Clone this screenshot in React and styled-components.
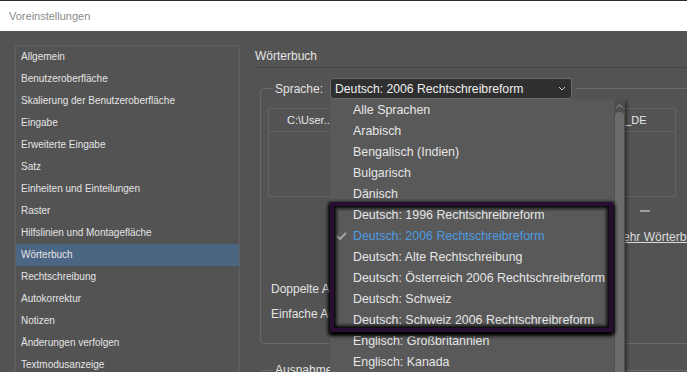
import React from 'react';
import styled, { createGlobalStyle } from 'styled-components';

const GlobalStyle = createGlobalStyle`
    html, body {
        margin: 0;
        padding: 0;
        overflow: hidden;
        background: #535353;
    }
`;

const Window = styled.div`
    width: 687px;
    height: 372px;
    overflow: hidden;
    box-sizing: border-box;
    border-top: 1px solid #2b2b2b;
    display: flex;
    flex-direction: column;
    background: #535353;
    font-family: 'Liberation Sans', Arial, sans-serif;
`;

const TitleBar = styled.div`
    height: 30px;
    flex-shrink: 0;
    background: #fff;
    padding-left: 9px;
    line-height: 30px;
    font-size: 11px;
    color: #8a8a8a;
`;

const Body = styled.div`
    flex: 1;
    min-height: 0;
    display: flex;
    padding: 14px 0 0 15px;
`;

const Sidebar = styled.div`
    width: 225px;
    flex-shrink: 0;
    box-sizing: border-box;
    border: 1px solid #5f5f5f;
    border-bottom: none;
`;

const SideItem = styled.div`
    height: 22px;
    line-height: 22px;
    padding-left: 5px;
    font-size: 10px;
    color: #e4e4e4;
    white-space: nowrap;
    background: ${(p) => (p.$active ? '#4b6683' : 'transparent')};
`;

const Content = styled.div`
    flex: 1;
    min-width: 0;
    margin-left: 14px;
    display: flex;
    flex-direction: column;
`;

const Heading = styled.div`
    height: 22px;
    line-height: 22px;
    padding-left: 1px;
    font-size: 12px;
    color: #e6e6e6;
    border-bottom: 1px solid #474747;
    flex-shrink: 0;
`;

const Group = styled.fieldset`
    margin: ${(p) => p.$top}px 0 0 6px;
    padding: 9px 0 0 7px;
    border: 1px solid #696969;
    border-radius: 4px;
    box-sizing: border-box;
    width: 460px;
    min-width: 0;
    flex-shrink: 0;
    height: ${(p) => (p.$height ? `${p.$height}px` : 'auto')};
`;

const Legend = styled.legend`
    padding: 0 3px 0 2px;
    margin-left: 5px;
`;

const LegendRow = styled.div`
    display: flex;
    align-items: center;
    gap: 7px;
    font-size: 12px;
    line-height: 16px;
    color: #e2e2e2;
`;

const SelectWrap = styled.div`
    position: relative;
`;

const SelectBox = styled.div`
    width: 242px;
    height: 21px;
    box-sizing: border-box;
    background: #2f2f2f;
    border: 1px solid #6b6b6b;
    border-radius: 3px;
    display: flex;
    align-items: center;
    justify-content: space-between;
    padding: 0 5px 0 4px;
    font-size: 12.2px;
    color: #f0f0f0;
`;

const Dropdown = styled.div`
    position: absolute;
    top: 100%;
    left: 0;
    width: 295px;
    height: 290px;
    z-index: 10;
    display: flex;
    background: #595959;
    box-shadow: 2px 2px 3px rgba(0, 0, 0, 0.45);
`;

const Options = styled.div`
    flex: 1;
    display: flex;
    flex-direction: column;
`;

const Option = styled.div`
    height: 21px;
    flex-shrink: 0;
    display: flex;
    align-items: center;
    font-size: 12.4px;
    white-space: nowrap;
    color: ${(p) => (p.$selected ? '#4c9be2' : '#e6e6e6')};
`;

const CheckSlot = styled.span`
    width: 23px;
    display: flex;
    justify-content: center;
`;

const Highlight = styled.div`
    position: relative;
    display: flex;
    flex-direction: column;

    ::after {
        content: '';
        position: absolute;
        top: -2px;
        bottom: -2px;
        left: 0;
        right: 1px;
        border: 4px solid #2a0d33;
        box-shadow: 0 2px 4px rgba(0, 0, 0, 0.3), inset 0 0 4px rgba(0, 0, 0, 0.3);
        pointer-events: none;
    }
`;

const Scrollbar = styled.div`
    width: 11px;
    display: flex;
    flex-direction: column;
    background: #4f4f4f;
`;

const ScrollUp = styled.div`
    height: 13px;
    display: flex;
    align-items: center;
    justify-content: center;
`;

const ScrollThumb = styled.div`
    flex: 1;
    margin: 0 1px;
    background: #6b6b6b;
    border-radius: 4px 4px 0 0;
`;

const DictArea = styled.div`
    width: 408px;
    display: flex;
    flex-direction: column;
`;

const Table = styled.div`
    height: 89px;
    box-sizing: border-box;
    border: 1px solid #626262;
`;

const TableHead = styled.div`
    display: grid;
    grid-template-columns: 344px 1fr;
    align-items: center;
    height: 22px;
    border-bottom: 1px solid #626262;
    font-size: 11px;
    color: #e8e8e8;
    white-space: nowrap;

    span:first-child {
        padding-left: 18px;
    }
`;

const MinusRow = styled.div`
    height: 22px;
    margin-top: 3px;
    display: flex;
    align-items: center;
    justify-content: flex-end;
    padding-right: 26px;
`;

const Minus = styled.div`
    width: 10px;
    height: 2px;
    background: #9d9d9d;
`;

const LinkRow = styled.div`
    height: 20px;
    margin-top: 5px;
    line-height: 20px;
    padding-left: 345px;
    white-space: nowrap;
    font-size: 12px;
    color: #dcdcdc;
    text-decoration: underline;
`;

const QuoteRow = styled.div`
    height: 25px;
    line-height: 25px;
    padding-left: 3px;
    font-size: 12px;
    color: #e2e2e2;
    white-space: nowrap;
    margin-top: ${(p) => p.$gap || 0}px;
`;

const sections = [
    'Allgemein',
    'Benutzeroberfläche',
    'Skalierung der Benutzeroberfläche',
    'Eingabe',
    'Erweiterte Eingabe',
    'Satz',
    'Einheiten und Einteilungen',
    'Raster',
    'Hilfslinien und Montagefläche',
    'Wörterbuch',
    'Rechtschreibung',
    'Autokorrektur',
    'Notizen',
    'Änderungen verfolgen',
    'Textmodusanzeige',
];

const before = ['Alle Sprachen', 'Arabisch', 'Bengalisch (Indien)', 'Bulgarisch', 'Dänisch'];
const german = [
    'Deutsch: 1996 Rechtschreibreform',
    'Deutsch: 2006 Rechtschreibreform',
    'Deutsch: Alte Rechtschreibung',
    'Deutsch: Österreich 2006 Rechtschreibreform',
    'Deutsch: Schweiz',
    'Deutsch: Schweiz 2006 Rechtschreibreform',
];
const after = ['Englisch: Großbritannien', 'Englisch: Kanada', 'Englisch: USA'];

const selected = 'Deutsch: 2006 Rechtschreibreform';

const Check = () => (
    <svg width="11" height="8" viewBox="0 0 11 8">
        <path d="M1 4.2 L4 7 L10 1" fill="none" stroke="#a8a8a8" strokeWidth="1.8" />
    </svg>
);

const LangOption = ({ name }) => (
    <Option $selected={name === selected}>
        <CheckSlot>{name === selected && <Check />}</CheckSlot>
        {name}
    </Option>
);

const App = () => {
    return (
        <>
            <GlobalStyle />
            <Window>
                <TitleBar>Voreinstellungen</TitleBar>
                <Body>
                    <Sidebar>
                        {sections.map((s) => (
                            <SideItem key={s} $active={s === 'Wörterbuch'}>
                                {s}
                            </SideItem>
                        ))}
                    </Sidebar>
                    <Content>
                        <Heading>Wörterbuch</Heading>
                        <Group $top={10} $height={266}>
                            <Legend>
                                <LegendRow>
                                    <span>Sprache:</span>
                                    <SelectWrap>
                                        <SelectBox>
                                            <span>{selected}</span>
                                            <svg width="8" height="5" viewBox="0 0 8 5">
                                                <path d="M1 1 L4 4 L7 1" fill="none" stroke="#c8c8c8" strokeWidth="1" />
                                            </svg>
                                        </SelectBox>
                                        <Dropdown>
                                            <Options>
                                                {before.map((l) => (
                                                    <LangOption key={l} name={l} />
                                                ))}
                                                <Highlight>
                                                    {german.map((l) => (
                                                        <LangOption key={l} name={l} />
                                                    ))}
                                                </Highlight>
                                                {after.map((l) => (
                                                    <LangOption key={l} name={l} />
                                                ))}
                                            </Options>
                                            <Scrollbar>
                                                <ScrollUp>
                                                    <svg width="7" height="4" viewBox="0 0 7 4">
                                                        <path d="M0.5 3.5 L3.5 0.8 L6.5 3.5" fill="none" stroke="#9a9a9a" strokeWidth="1" />
                                                    </svg>
                                                </ScrollUp>
                                                <ScrollThumb />
                                            </Scrollbar>
                                        </Dropdown>
                                    </SelectWrap>
                                </LegendRow>
                            </Legend>
                            <DictArea>
                                <Table>
                                    <TableHead>
                                        <span>C:\User...</span>
                                        <span>de_DE</span>
                                    </TableHead>
                                </Table>
                                <MinusRow>
                                    <Minus />
                                </MinusRow>
                                <LinkRow>Mehr Wörterbücher herunterladen</LinkRow>
                            </DictArea>
                            <QuoteRow $gap={30}>Doppelte Anführungszeichen:</QuoteRow>
                            <QuoteRow>Einfache Anführungszeichen:</QuoteRow>
                        </Group>
                        <Group $top={18}>
                            <Legend>
                                <LegendRow>Ausnahmen</LegendRow>
                            </Legend>
                        </Group>
                    </Content>
                </Body>
            </Window>
        </>
    );
};

export default App;
